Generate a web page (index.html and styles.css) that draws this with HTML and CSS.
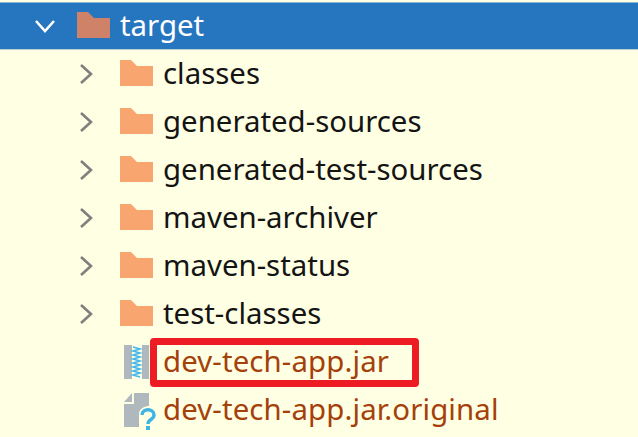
FILE: index.html
```html
<!DOCTYPE html>
<html lang="en">
<head>
    <meta charset="UTF-8">
    <title>target</title>
    <link rel="stylesheet" href="styles.css">
</head>
<body>
    <svg width="0" height="0" class="defs">
        <symbol id="folder" viewBox="0 0 33 26">
            <path d="M0 0H11L17 6H33V26H0Z" fill="currentColor"/>
        </symbol>
        <symbol id="arrow" viewBox="0 0 14 22">
            <path d="M2 2L12 11L2 20" fill="none" stroke="currentColor" stroke-width="2.6"/>
        </symbol>
    </svg>
    <div class="tree">
        <div class="row selected">
            <svg class="open-arrow" width="22" height="14" viewBox="0 0 22 14"><path d="M2 2L11 12L20 2" fill="none" stroke="currentColor" stroke-width="2.6"/></svg>
            <svg class="folder" width="33" height="26"><use href="#folder"/></svg>
            <span>target</span>
        </div>
        <div class="row child">
            <svg class="arrow" width="14" height="22"><use href="#arrow"/></svg>
            <svg class="folder" width="33" height="26"><use href="#folder"/></svg>
            <span>classes</span>
        </div>
        <div class="row child">
            <svg class="arrow" width="14" height="22"><use href="#arrow"/></svg>
            <svg class="folder" width="33" height="26"><use href="#folder"/></svg>
            <span>generated-sources</span>
        </div>
        <div class="row child">
            <svg class="arrow" width="14" height="22"><use href="#arrow"/></svg>
            <svg class="folder" width="33" height="26"><use href="#folder"/></svg>
            <span>generated-test-sources</span>
        </div>
        <div class="row child">
            <svg class="arrow" width="14" height="22"><use href="#arrow"/></svg>
            <svg class="folder" width="33" height="26"><use href="#folder"/></svg>
            <span>maven-archiver</span>
        </div>
        <div class="row child">
            <svg class="arrow" width="14" height="22"><use href="#arrow"/></svg>
            <svg class="folder" width="33" height="26"><use href="#folder"/></svg>
            <span>maven-status</span>
        </div>
        <div class="row child">
            <svg class="arrow" width="14" height="22"><use href="#arrow"/></svg>
            <svg class="folder" width="33" height="26"><use href="#folder"/></svg>
            <span>test-classes</span>
        </div>
        <div class="row file">
            <svg class="file-icon" width="25" height="34" viewBox="0 0 25 34">
                <rect x="0" y="0" width="25" height="34" fill="#afb8bc"/>
                <rect x="8" y="0" width="10" height="34" fill="#fdfde8"/>
                <path d="M9 2L16 4L9 6L16 8L9 10L16 12L9 14L16 16L9 18L16 20L9 22L16 24L9 26L16 28L9 30L16 32" fill="none" stroke="#45b8ea" stroke-width="1.6"/>
            </svg>
            <span class="unknown">dev-tech-app.jar</span>
            <div class="marker"></div>
        </div>
        <div class="row file question">
            <svg class="file-icon" width="32" height="37" viewBox="0 0 32 37">
                <path d="M10 0H25V13C19 13 15 17 15 21V34H0V11H10Z" fill="#afb8bc"/>
                <path d="M8 0V9H0Z" fill="#afb8bc"/>
                <path d="M18 22C18 15 30 15 30 22C30 27 24 26 24 31" fill="none" stroke="#3eb4e6" stroke-width="3.4"/>
                <rect x="22" y="33" width="4" height="4" fill="#3eb4e6"/>
            </svg>
            <span class="unknown">dev-tech-app.jar.original</span>
        </div>
    </div>
</body>
</html>
```

FILE: styles.css
```css
body {
    margin: 0;
    background: #ffffe4;
    font-family: "Noto Sans", "Open Sans", sans-serif;
    font-size: 29.4px;
    color: #141414;
    overflow: hidden;
}

.defs {
    display: block;
}

.tree {
    padding-top: 2px;
}

.row {
    display: flex;
    align-items: center;
    position: relative;
    height: 48px;
}

.row span {
    margin-bottom: 3px;
}

.selected {
    background: #2675bf;
    color: #fff;
    padding-left: 34px;
    border-top: 1px solid #8db4da;
    border-bottom: 1px solid #b9cfd4;
    height: 46px;
}

.folder {
    margin-bottom: 2px;
}

.selected .folder {
    margin-left: 21px;
    color: #cf8268;
}

.selected span {
    margin-left: 10px;
}

.child {
    padding-left: 79px;
}

.arrow {
    color: #7f7f7f;
}

.child .folder {
    margin-left: 27px;
    color: #f9a56f;
}

.child span {
    margin-left: 10px;
}

.file {
    padding-left: 124px;
}

.file-icon {
    flex: none;
}

.question .file-icon {
    margin-top: 3px;
}

.file span {
    position: absolute;
    left: 163px;
    letter-spacing: 0.12px;
}

.unknown {
    color: #a5400a;
}

.marker {
    position: absolute;
    left: 150px;
    top: 0;
    width: 269px;
    height: 49px;
    box-sizing: border-box;
    border: 7px solid #ed1c24;
    border-radius: 4px;
}
```
